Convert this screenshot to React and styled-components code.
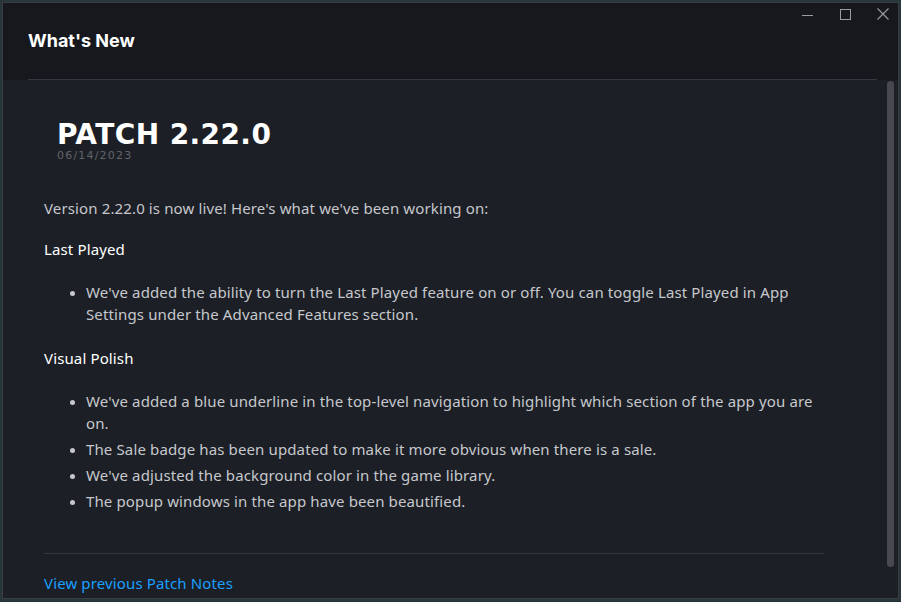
import styled, { createGlobalStyle } from "styled-components";

const GlobalStyle = createGlobalStyle`
  html, body {
    margin: 0;
    padding: 0;
    background: #26363a;
  }
  #root {
    width: 901px;
    height: 602px;
    padding: 2px 2px 3px 2px;
    box-sizing: border-box;
  }
`;

const Window = styled.div`
  width: 100%;
  height: 100%;
  box-sizing: border-box;
  border: 1px solid #3a3d44;
  display: flex;
  flex-direction: column;
  background: #1c1f26;
  overflow: hidden;
`;

const Header = styled.header`
  position: relative;
  height: 77px;
  background: #16181e;
  padding: 0 21px 0 25px;
  display: flex;
  flex-direction: column;
`;

const Title = styled.h1`
  flex: 1;
  margin: 0;
  display: flex;
  align-items: center;
  padding-bottom: 1px;
  font-family: Inter, "Liberation Sans", sans-serif;
  font-weight: 700;
  font-size: 18px;
  color: #ffffff;
`;

const HeaderLine = styled.div`
  height: 1px;
  background: #35383f;
`;

const Controls = styled.div`
  position: absolute;
  top: 1px;
  right: 0;
  display: flex;
  align-items: center;
  gap: 8px;
`;

const ControlButton = styled.button`
  width: 30px;
  height: 20px;
  padding: 0;
  border: 0;
  background: transparent;
  display: flex;
  align-items: center;
  justify-content: center;
  color: #9a9ca1;
`;

const Body = styled.div`
  flex: 1;
  display: flex;
  min-height: 0;
`;

const Content = styled.main`
  flex: 1;
  padding: 42px 53px 0 41px;
  font-family: "Noto Sans", "Open Sans", sans-serif;
  font-size: 15px;
  letter-spacing: 0.13px;
  color: #c6c8cc;
`;

const PatchHead = styled.div`
  padding-left: 13px;
  margin-bottom: 35px;
`;

const PatchTitle = styled.h2`
  margin: 0;
  font-family: "DejaVu Sans", sans-serif;
  font-weight: 700;
  font-size: 28px;
  line-height: 26px;
  letter-spacing: 0.4px;
  color: #ffffff;
`;

const PatchDate = styled.div`
  margin-top: 1px;
  font-family: "DejaVu Sans", sans-serif;
  font-size: 11px;
  letter-spacing: 1.2px;
  color: #626469;
`;

const Paragraph = styled.p`
  margin: 0 0 19px;
  line-height: 22px;
`;

const SectionTitle = styled.h3`
  margin: 0 0 21px;
  font-size: 15px;
  font-weight: 400;
  line-height: 22px;
  color: #ffffff;
`;

const List = styled.ul`
  margin: 0 0 22px;
  padding-left: 42px;
  line-height: 22px;
`;

const Item = styled.li`
  margin-bottom: 4px;
  &::marker {
    font-size: 13px;
  }
`;

const Divider = styled.hr`
  margin: 41px 0 0;
  border: 0;
  border-top: 1px solid #35373d;
`;

const PrevLink = styled.a`
  display: inline-block;
  margin-top: 18px;
  color: #1a9fff;
  text-decoration: none;
  line-height: 22px;
`;

const ScrollTrack = styled.div`
  width: 21px;
  padding: 1px 0 31px;
  box-sizing: border-box;
`;

const ScrollThumb = styled.div`
  width: 7px;
  height: 100%;
  border-radius: 4px;
  background: #48494f;
  margin-left: 10px;
`;

const sections = [
  {
    title: "Last Played",
    items: [
      "We've added the ability to turn the Last Played feature on or off. You can toggle Last Played in App Settings under the Advanced Features section.",
    ],
  },
  {
    title: "Visual Polish",
    items: [
      "We've added a blue underline in the top-level navigation to highlight which section of the app you are on.",
      "The Sale badge has been updated to make it more obvious when there is a sale.",
      "We've adjusted the background color in the game library.",
      "The popup windows in the app have been beautified.",
    ],
  },
];

const App = () => {
  return (
    <>
      <GlobalStyle />
      <Window>
        <Header>
          <Title>What's New</Title>
          <HeaderLine />
          <Controls>
            <ControlButton aria-label="Minimize">
              <svg width="11" height="11" viewBox="0 0 11 11">
                <path d="M0 6.5h11" stroke="currentColor" strokeWidth="1" />
              </svg>
            </ControlButton>
            <ControlButton aria-label="Maximize">
              <svg width="11" height="11" viewBox="0 0 11 11">
                <rect x="0.5" y="0.5" width="10" height="10" fill="none" stroke="currentColor" strokeWidth="1" />
              </svg>
            </ControlButton>
            <ControlButton aria-label="Close">
              <svg width="12" height="12" viewBox="0 0 12 12">
                <path d="M0.5 0.5l11 11M11.5 0.5l-11 11" stroke="currentColor" strokeWidth="1.1" />
              </svg>
            </ControlButton>
          </Controls>
        </Header>
        <Body>
          <Content>
            <PatchHead>
              <PatchTitle>PATCH 2.22.0</PatchTitle>
              <PatchDate>06/14/2023</PatchDate>
            </PatchHead>
            <Paragraph>Version 2.22.0 is now live! Here's what we've been working on:</Paragraph>
            {sections.map((s) => (
              <div key={s.title}>
                <SectionTitle>{s.title}</SectionTitle>
                <List>
                  {s.items.map((it) => (
                    <Item key={it}>{it}</Item>
                  ))}
                </List>
              </div>
            ))}
            <Divider />
            <PrevLink href="#">View previous Patch Notes</PrevLink>
          </Content>
          <ScrollTrack>
            <ScrollThumb />
          </ScrollTrack>
        </Body>
      </Window>
    </>
  );
};

export default App;
